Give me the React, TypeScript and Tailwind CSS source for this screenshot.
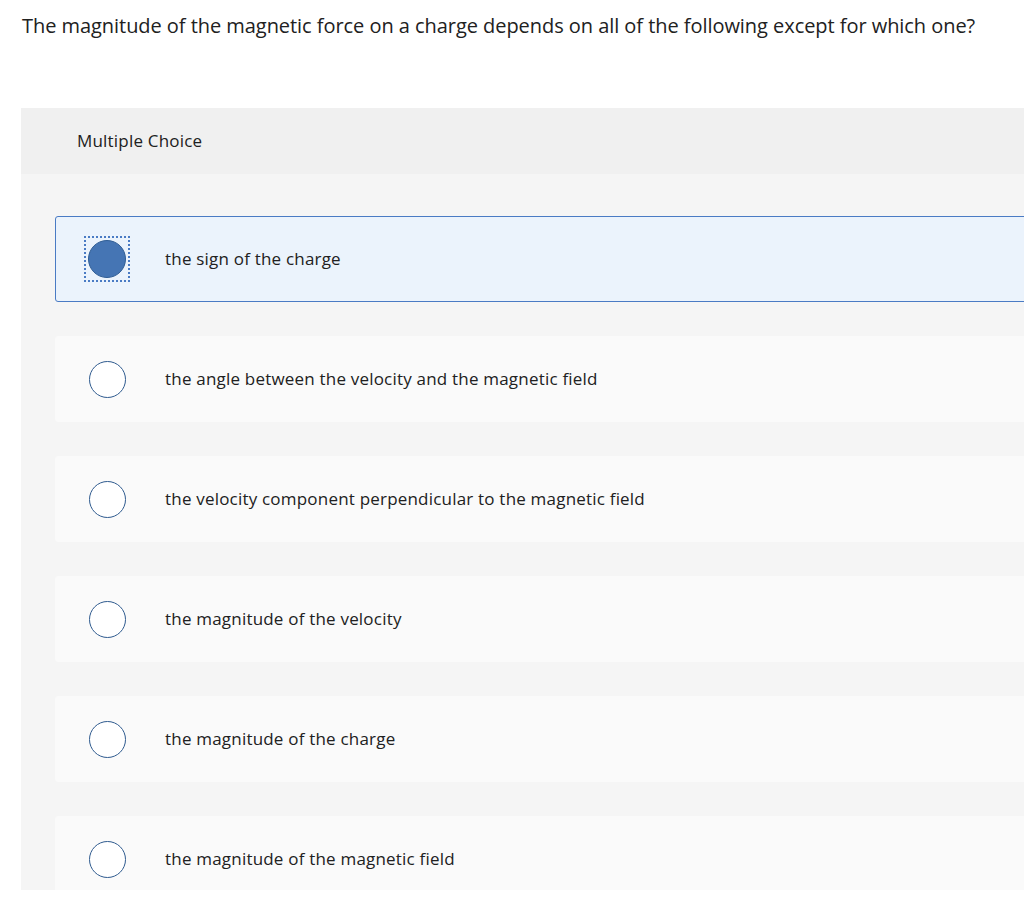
const options = [
  "the sign of the charge",
  "the angle between the velocity and the magnetic field",
  "the velocity component perpendicular to the magnetic field",
  "the magnitude of the velocity",
  "the magnitude of the charge",
  "the magnitude of the magnetic field",
];

export default function App() {
  const selected = 0;
  return (
    <div
      className="h-[899px] w-[1024px] overflow-hidden bg-white text-[#212121]"
      style={{ fontFamily: '"Open Sans", "Liberation Sans", sans-serif' }}
    >
      <h1 className="pl-[22px] pt-[12px] text-[20px] leading-[28px] tracking-[-0.05px]">
        The magnitude of the magnetic force on a charge depends on all of the following except for which one?
      </h1>

      <div className="ml-[21px] mt-[68px] h-[782px] w-[1040px] overflow-hidden bg-[#f5f5f5]">
        <div className="flex h-[66px] items-center bg-[#f0f0f0] pl-[56px] text-[17px] tracking-[0.2px]">
          Multiple Choice
        </div>

        <div className="flex flex-col gap-[34px] pl-[34px] pt-[42px]">
          {options.map((text, i) => {
            const isSel = i === selected;
            return (
              <div
                key={text}
                className={
                  isSel
                    ? "flex h-[86px] items-center rounded-[3px] border border-[#4a7bc4] bg-[#ebf3fc] pl-[28px]"
                    : "flex h-[86px] items-center rounded-[3px] border border-[#fafafa] bg-[#fafafa] pl-[28px]"
                }
              >
                <div
                  className={
                    isSel
                      ? "flex h-[46px] w-[46px] items-center justify-center border-2 border-dotted border-[#4a7bc4]"
                      : "flex h-[46px] w-[46px] items-center justify-center"
                  }
                >
                  {isSel ? (
                    <div className="h-[38px] w-[38px] rounded-full border border-[#2f5d95] bg-[#4575b4]" />
                  ) : (
                    <div className="h-[37px] w-[37px] rounded-full border-[1.5px] border-[#2f5b8f] bg-white" />
                  )}
                </div>
                <span className="ml-[35px] text-[17px] tracking-[0.2px]">{text}</span>
              </div>
            );
          })}
        </div>
      </div>
    </div>
  );
}
